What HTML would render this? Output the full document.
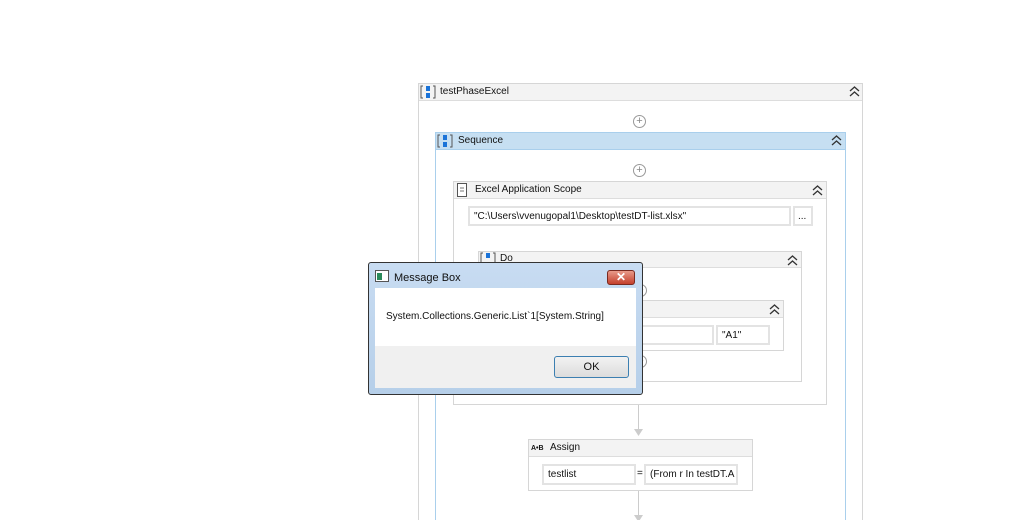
<!DOCTYPE html><html style="overflow:hidden;height:520px"><head><style>
body{margin:0;width:1035px;height:520px;background:#fff;position:relative;overflow:hidden;font-family:"Liberation Sans",sans-serif;font-size:10px;color:#111}
div{position:absolute;box-sizing:border-box}
.hdr{background:#f3f3f3;border-bottom:1px solid #ddd}
.box{border:1px solid #d6d6d6;background:#fff}
.t{position:absolute;white-space:nowrap}
.inp{border:2px solid #e3e3e3;background:#fff;padding:3px 4px;font-size:10px;white-space:nowrap;overflow:hidden}
.plus{width:13px;height:13px;border:1px solid #999;border-radius:50%;color:#888;font-size:11px;line-height:11px;text-align:center}
svg.ch{position:absolute}
</style></head><body>
<div class="box" style="left:418px;top:83px;width:445px;height:440px"></div>
<div class="hdr" style="left:419px;top:84px;width:443px;height:17px"></div>
<svg style="position:absolute;left:420px;top:84px" width="16" height="16"><path d="M3 2H1V14H3M13 2H15V14H13" stroke="#555" fill="none"/><rect x="6" y="2" width="4" height="5" fill="#1a73d8"/><rect x="6" y="9" width="4" height="5" fill="#1a73d8"/></svg>
<div class="t" style="left:440px;top:86px">testPhaseExcel</div>
<svg class="ch" style="left:849px;top:86px" width="11" height="11"><path d="M1 5L5.5 1L10 5M1 10L5.5 6L10 10" stroke="#333" fill="none" stroke-width="1.3"/></svg>
<div class="plus" style="left:633px;top:115px">+</div>
<div style="left:435px;top:132px;width:411px;height:391px;border:1px solid #a9cfec;background:#fff"></div>
<div style="left:436px;top:133px;width:409px;height:17px;background:#c6dff2;border-bottom:1px solid #a9cfec"></div>
<svg style="position:absolute;left:437px;top:133px" width="16" height="16"><path d="M3 2H1V14H3M13 2H15V14H13" stroke="#555" fill="none"/><rect x="6" y="2" width="4" height="5" fill="#1a73d8"/><rect x="6" y="9" width="4" height="5" fill="#1a73d8"/></svg>
<div class="t" style="left:458px;top:135px">Sequence</div>
<svg class="ch" style="left:831px;top:135px" width="11" height="11"><path d="M1 5L5.5 1L10 5M1 10L5.5 6L10 10" stroke="#333" fill="none" stroke-width="1.3"/></svg>
<div class="plus" style="left:633px;top:164px">+</div>
<div class="box" style="left:453px;top:181px;width:374px;height:224px"></div>
<div class="hdr" style="left:454px;top:182px;width:372px;height:17px"></div>
<svg style="position:absolute;left:456px;top:182px" width="12" height="16"><rect x="1.5" y="1.5" width="9" height="13" fill="#fff" stroke="#555"/><path d="M4 6H8M4 9H8" stroke="#777"/></svg>
<div class="t" style="left:475px;top:184px">Excel Application Scope</div>
<svg class="ch" style="left:812px;top:185px" width="11" height="11"><path d="M1 5L5.5 1L10 5M1 10L5.5 6L10 10" stroke="#333" fill="none" stroke-width="1.3"/></svg>
<div class="inp" style="left:468px;top:206px;width:323px;height:20px">"C:\Users\vvenugopal1\Desktop\testDT-list.xlsx"</div>
<div class="inp" style="left:793px;top:206px;width:20px;height:20px;padding:3px 3px">...</div>
<div class="box" style="left:478px;top:251px;width:324px;height:131px"></div>
<div class="hdr" style="left:479px;top:252px;width:322px;height:16px"></div>
<svg style="position:absolute;left:480px;top:252px" width="16" height="14"><path d="M3 1H1V13H3M13 1H15V13H13" stroke="#555" fill="none"/><rect x="6" y="1" width="4" height="5" fill="#1a73d8"/></svg>
<div class="t" style="left:500px;top:253px">Do</div>
<svg class="ch" style="left:787px;top:255px" width="11" height="11"><path d="M1 5L5.5 1L10 5M1 10L5.5 6L10 10" stroke="#333" fill="none" stroke-width="1.3"/></svg>
<div class="plus" style="left:634px;top:284px">+</div>
<div class="box" style="left:490px;top:300px;width:294px;height:51px"></div>
<div class="hdr" style="left:491px;top:301px;width:292px;height:17px"></div>
<svg class="ch" style="left:769px;top:304px" width="11" height="11"><path d="M1 5L5.5 1L10 5M1 10L5.5 6L10 10" stroke="#333" fill="none" stroke-width="1.3"/></svg>
<div class="inp" style="left:600px;top:325px;width:114px;height:20px"></div>
<div class="inp" style="left:716px;top:325px;width:54px;height:20px">"A1"</div>
<div class="plus" style="left:634px;top:355px">+</div>
<div style="left:638px;top:405px;width:1px;height:30px;background:#ccc"></div>
<svg style="position:absolute;left:634px;top:429px" width="10" height="8"><path d="M0 0H9L4.5 7Z" fill="#ccc"/></svg>
<div class="box" style="left:528px;top:439px;width:225px;height:52px"></div>
<div class="hdr" style="left:529px;top:440px;width:223px;height:17px"></div>
<div class="t" style="left:531px;top:445px;font-size:7px;font-weight:bold">A•B</div>
<div class="t" style="left:550px;top:442px">Assign</div>
<div class="inp" style="left:542px;top:464px;width:94px;height:21px">testlist</div>
<div class="t" style="left:637px;top:468px">=</div>
<div class="inp" style="left:644px;top:464px;width:94px;height:21px">(From r In testDT.A</div>
<div style="left:638px;top:491px;width:1px;height:26px;background:#ccc"></div>
<svg style="position:absolute;left:634px;top:515px" width="10" height="5"><path d="M0 0H9L4.5 7Z" fill="#ccc"/></svg>
<div style="left:368px;top:262px;width:275px;height:133px;border:1px solid #333;background:linear-gradient(#c8dcf2,#b6cfe9);border-radius:3px"></div>
<svg style="position:absolute;left:375px;top:270px" width="14" height="12"><rect x="0.5" y="0.5" width="13" height="11" fill="#fff" stroke="#555"/><rect x="2" y="3" width="5" height="7" fill="#2a8a5a"/></svg>
<div class="t" style="left:394px;top:272px;font-size:11px">Message Box</div>
<div style="left:607px;top:270px;width:28px;height:15px;background:linear-gradient(#e89a8a,#c4402c);border:1px solid #7a2a20;border-radius:3px;color:#fff;font-weight:bold;text-align:center;line-height:13px;font-size:12px">✕</div>
<div style="left:375px;top:288px;width:261px;height:58px;background:#fff"></div>
<div style="left:375px;top:346px;width:261px;height:42px;background:#f0f0f0"></div>
<div class="t" style="left:386px;top:311px">System.Collections.Generic.List`1[System.String]</div>
<div style="left:554px;top:356px;width:75px;height:22px;border:1px solid #3c7fb1;border-radius:3px;background:linear-gradient(#f2f2f2,#dcdcdc);text-align:center;line-height:20px;font-size:11px">OK</div>
</body></html>
